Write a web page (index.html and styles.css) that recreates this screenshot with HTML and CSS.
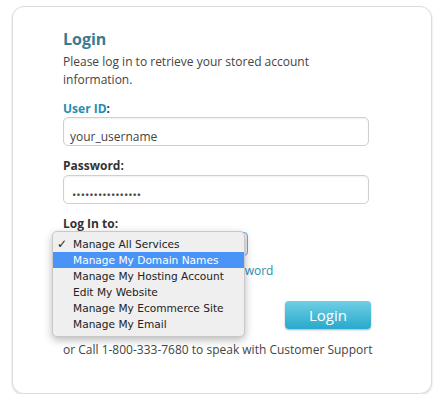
FILE: index.html
```html
<!DOCTYPE html>
<html lang="en">

<head>
    <meta charset="UTF-8">
    <meta name="viewport" content="width=device-width, initial-scale=1.0">
    <title>Login</title>
    <link rel="stylesheet" href="styles.css">
</head>

<body>
    <div class="login-box">
        <h1>Login</h1>
        <p class="intro">Please log in to retrieve your stored account<br>information.</p>

        <form class="login-form" onsubmit="return false">
            <label for="user-id" class="label-user"><span>User ID</span>:</label>
            <input type="text" id="user-id" value="your_username">

            <label for="password">Password:</label>
            <input type="password" id="password" value="passwordpassword">

            <label for="service">Log In to:</label>
            <div class="select-wrap">
                <select id="service">
                    <option>Manage All Services</option>
                </select>
                <ul class="service-menu">
                    <li class="checked">Manage All Services</li>
                    <li class="active">Manage My Domain Names</li>
                    <li>Manage My Hosting Account</li>
                    <li>Edit My Website</li>
                    <li>Manage My Ecommerce Site</li>
                    <li>Manage My Email</li>
                </ul>
            </div>

            <a href="#" class="forgot">Forgot your User ID or your Password</a>

            <div class="button-row">
                <button type="submit" class="login-button">Login</button>
            </div>
        </form>

        <p class="support">or Call 1-800-333-7680 to speak with Customer Support</p>
    </div>
</body>

</html>
```

FILE: styles.css
```css
body {
    font-family: "Open Sans", Arial, sans-serif;
    background-color: #fff;
    color: #444;
    margin: 0;
    padding: 0;
}

.login-box {
    box-sizing: border-box;
    width: 420px;
    height: 388px;
    margin: 6px 0 0 12px;
    padding: 0 60px 0 50px;
    border: 1px solid #dcdcdc;
    border-radius: 12px;
    box-shadow: 0 1px 2px rgba(0, 0, 0, 0.2);
}

.login-box h1 {
    margin: 0;
    padding-top: 22px;
    font-size: 16px;
    line-height: 20px;
    color: #3b7b90;
}

.intro {
    margin: 4px 0 0;
    font-size: 12px;
    line-height: 18px;
}

.login-form {
    display: flex;
    flex-direction: column;
    margin-top: 12px;
}

.login-form label {
    font-size: 12px;
    font-weight: bold;
    line-height: 16px;
    color: #333;
}

.label-user span {
    color: #1f8db0;
}

.login-form input {
    box-sizing: border-box;
    width: 306px;
    height: 29px;
    margin: 0 0 12px;
    padding: 9px 6px 0;
    border: 1px solid #cfcfcf;
    border-radius: 5px;
    font-family: "Open Sans", Arial, sans-serif;
    font-size: 12px;
    color: #444;
    box-shadow: inset 0 1px 2px rgba(0, 0, 0, 0.06);
}

.login-form input[type="password"] {
    margin-top: 1px;
    padding-left: 8px;
    font-size: 11.5px;
}

.select-wrap {
    position: relative;
    margin-top: -1px;
}

.select-wrap select {
    width: 185px;
    height: 24px;
    border: 1px solid #6aa7f0;
    border-radius: 4px;
    background-color: #e9eef5;
}

.service-menu {
    position: absolute;
    left: -11px;
    top: 0;
    width: 193px;
    margin: 0;
    padding: 4px 0;
    list-style: none;
    background-color: #efefef;
    border: 1px solid rgba(0, 0, 0, 0.16);
    border-radius: 5px;
    box-shadow: 0 3px 9px rgba(0, 0, 0, 0.28);
    box-sizing: border-box;
    font-family: "DejaVu Sans", Arial, sans-serif;
    font-size: 10.6px;
    color: #222;
}

.service-menu li {
    height: 16px;
    line-height: 16px;
    padding-left: 20px;
    position: relative;
}

.service-menu li.checked::before {
    content: "\2713";
    position: absolute;
    left: 4px;
    font-size: 12px;
    font-weight: bold;
}

.service-menu li.active {
    background-color: #4a94f7;
    color: #fff;
}

.forgot {
    margin-top: 6px;
    font-size: 12px;
    line-height: 18px;
    color: #1f8db0;
    text-decoration: none;
}

.button-row {
    display: flex;
    justify-content: flex-end;
    margin-top: 21px;
}

.login-button {
    width: 86px;
    height: 28px;
    border: none;
    border-radius: 4px;
    background: linear-gradient(#70cee4, #28a9cc);
    box-shadow: 0 1px 2px rgba(0, 0, 0, 0.3);
    font-family: "Open Sans", Arial, sans-serif;
    font-size: 15px;
    color: #fff;
    cursor: pointer;
}

.support {
    margin: 12px 0 0;
    font-size: 12px;
    line-height: 18px;
    white-space: nowrap;
}
```
